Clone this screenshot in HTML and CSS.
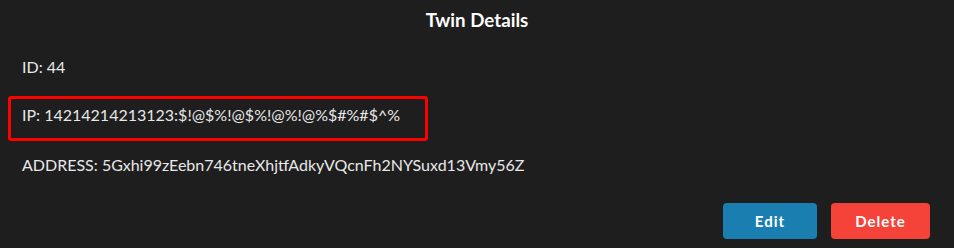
FILE: index.html
```html
<!DOCTYPE html>
<html>
<head>
<meta charset="utf-8">
<link rel="stylesheet" href="styles.css">
</head>
<body>
<div class="modal">
  <h3 class="title">Twin Details</h3>
  <div class="rows">
    <div class="row">ID: 44</div>
    <div class="row highlight">IP: 14214214213123:$!@$%!@$%!@%!@%$#%#$^%</div>
    <div class="row">ADDRESS: 5Gxhi99zEebn746tneXhjtfAdkyVQcnFh2NYSuxd13Vmy56Z</div>
  </div>
  <div class="actions">
    <button class="btn edit">Edit</button>
    <button class="btn delete">Delete</button>
  </div>
</div>
</body>
</html>
```
FILE: styles.css
```css
html, body {
  margin: 0;
  padding: 0;
  background: #1e1e1e;
}
.modal {
  width: 954px;
  height: 248px;
  box-sizing: border-box;
  font-family: Lato, "Open Sans", sans-serif;
  color: #e8e8e8;
  padding-top: 9px;
}
.title {
  margin: 0;
  text-align: center;
  font-size: 18.72px;
  font-weight: 700;
  line-height: 22px;
  color: #ffffff;
}
.rows {
  display: flex;
  flex-direction: column;
  align-items: flex-start;
  margin-top: 26px;
  padding-left: 8px;
}
.row {
  font-size: 16px;
  line-height: 20px;
  padding: 0 14px;
  white-space: nowrap;
}
.highlight {
  width: 420px;
  box-sizing: border-box;
  border: 3px solid #ff0000;
  border-radius: 3px;
  padding: 6px 11px 13px;
  margin: 19px 0 14px;
}
.actions {
  display: flex;
  justify-content: flex-end;
  gap: 14px;
  padding-right: 24px;
  margin-top: 28px;
}
.btn {
  font-family: Lato, sans-serif;
  font-weight: 700;
  font-size: 15px;
  letter-spacing: 1px;
  color: #ffffff;
  border: none;
  border-radius: 4px;
  height: 36px;
  padding: 0;
  cursor: pointer;
}
.edit {
  background: #1a7fb0;
  width: 94px;
}
.delete {
  background: #f5433a;
  width: 99px;
}
```
